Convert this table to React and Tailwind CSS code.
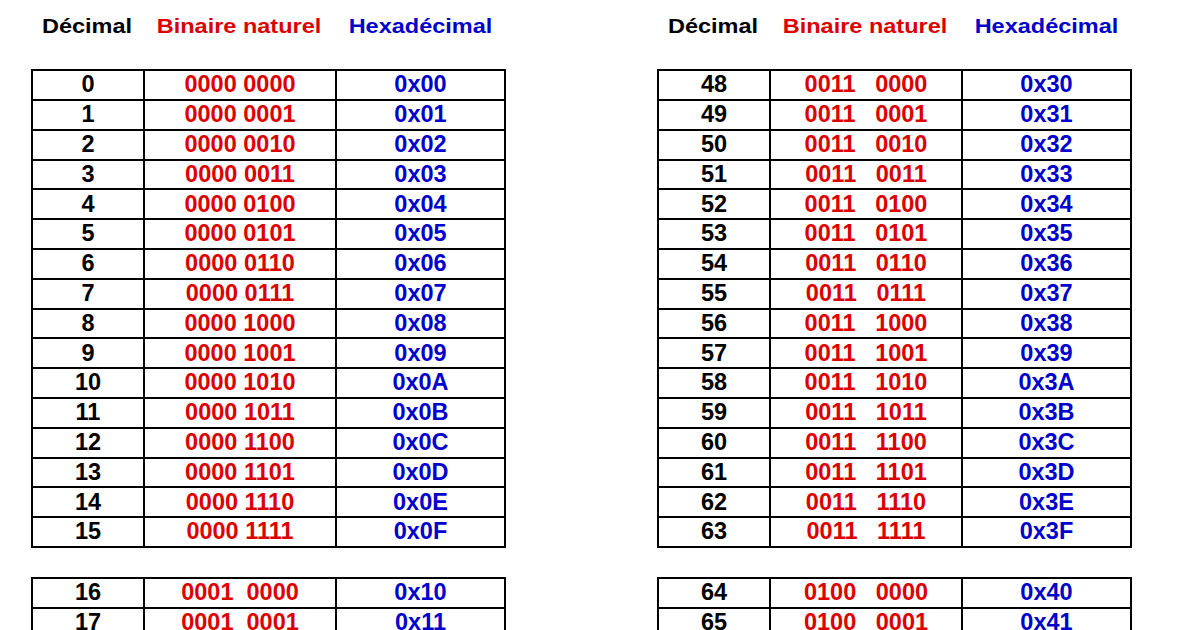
import React from "react";

const bin = (n) => n.toString(2).padStart(8, "0");
const hex = (n) => "0x" + n.toString(16).toUpperCase().padStart(2, "0");

const Row = ({ n, gap, first }) => {
  const b = bin(n);
  return (
    <div className={`flex ${first ? "h-[28px]" : "h-[29.8px] border-t-2 border-black"}`}>
      <div className="w-[110px] flex items-center justify-center text-black">{n}</div>
      <div className="w-[192px] border-l-2 border-black flex items-center justify-center text-[#dd0000] whitespace-pre">
        {b.slice(0, 4) + gap + b.slice(4)}
      </div>
      <div className="flex-1 border-l-2 border-black flex items-center justify-center text-[#0000cc]">
        {hex(n)}
      </div>
    </div>
  );
};

const Block = ({ from, count, gap }) => (
  <div className="border-2 border-black w-[475px]">
    {Array.from({ length: count }, (_, i) => (
      <Row key={i} n={from + i} gap={gap} first={i === 0} />
    ))}
  </div>
);

const Column = ({ start, gapA, gapB }) => (
  <div className="flex flex-col w-[475px] shrink-0">
    <div className="flex h-[50px] pt-[4px] shrink-0 items-center text-[23.5px] scale-y-[0.88]">
      <div className="w-[112px] text-center text-black">Décimal</div>
      <div className="w-[192px] text-center text-[#dd0000]">Binaire naturel</div>
      <div className="flex-1 text-center text-[#0000cc]">Hexadécimal</div>
    </div>
    <div className="mt-[19px] text-[23.5px] shrink-0">
      <Block from={start} count={16} gap={gapA} />
      <div className="h-[29px]" />
      <Block from={start + 16} count={2} gap={gapB} />
    </div>
  </div>
);

export default function App() {
  return (
    <div
      className="w-[1200px] h-[630px] overflow-hidden bg-white font-bold flex items-start gap-[151px] pl-[31px] leading-none"
      style={{ fontFamily: '"Liberation Sans", Arial, sans-serif' }}
    >
      <Column start={0} gapA=" " gapB="  " />
      <Column start={48} gapA="   " gapB="   " />
    </div>
  );
}
